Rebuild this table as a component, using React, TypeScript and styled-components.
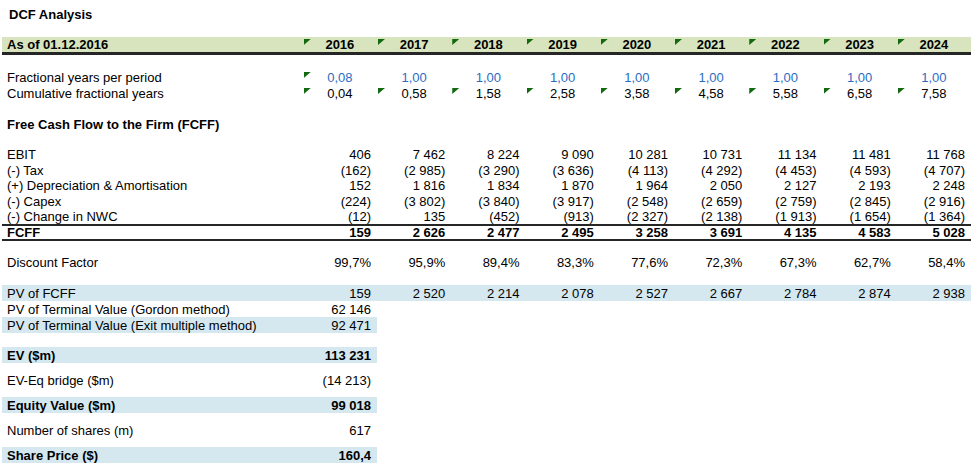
import React from "react";
import styled, { createGlobalStyle, css } from "styled-components";

const Global = createGlobalStyle`
  html, body { margin: 0; padding: 0; background: #ffffff; }
  body {
    font-family: "Liberation Sans", Arial, Helvetica, sans-serif;
    font-size: 13px;
    color: #000000;
  }
`;

const Sheet = styled.div`
  margin-left: 2px;
  width: 969px;
  display: flex;
  flex-direction: column;
`;

type RowProps = {
  $h: number;
  $mt?: number;
  $bg?: string;
  $short?: boolean;
  $bold?: boolean;
  $top?: number;
  $bottom?: number;
};

const Row = styled.div<RowProps>`
  display: grid;
  grid-template-columns: 300.75px repeat(9, 74.25px);
  align-items: center;
  height: ${(p) => p.$h}px;
  margin-top: ${(p) => p.$mt ?? 0}px;
  background: ${(p) => p.$bg ?? "transparent"};
  width: ${(p) => (p.$short ? "375px" : "969px")};
  font-weight: ${(p) => (p.$bold ? 700 : 400)};
  line-height: 1;
  ${(p) =>
    p.$top
      ? css`
          border-top: ${p.$top}px solid #262626;
        `
      : ""}
  ${(p) =>
    p.$bottom
      ? css`
          border-bottom: ${p.$bottom}px solid #262626;
        `
      : ""}
`;

const Title = styled.div`
  height: 28px;
  display: flex;
  align-items: center;
  padding-left: 7px;
  font-weight: 700;
`;

const Label = styled.div`
  padding-left: 5px;
  white-space: nowrap;
`;

const Cell = styled.div<{ $align?: "right" | "center"; $blue?: boolean }>`
  position: relative;
  height: 100%;
  display: flex;
  align-items: center;
  justify-content: ${(p) => (p.$align === "center" ? "center" : "flex-end")};
  padding-right: ${(p) => (p.$align === "center" ? "0" : "6px")};
  color: ${(p) => (p.$blue ? "#2a6cc4" : "inherit")};
  white-space: nowrap;
`;

const Flag = styled.span<{ $top?: number }>`
  position: absolute;
  left: 1px;
  top: ${(p) => p.$top ?? 2}px;
  width: 7px;
  height: 6px;
  background: #13690f;
  clip-path: polygon(0 0, 100% 0, 0 100%);
`;

const years = ["2016", "2017", "2018", "2019", "2020", "2021", "2022", "2023", "2024"];
const frac = ["0,08", "1,00", "1,00", "1,00", "1,00", "1,00", "1,00", "1,00", "1,00"];
const cum = ["0,04", "0,58", "1,58", "2,58", "3,58", "4,58", "5,58", "6,58", "7,58"];

const fcffRows: { label: string; values: string[]; h: number }[] = [
  { label: "EBIT", h: 16, values: ["406", "7 462", "8 224", "9 090", "10 281", "10 731", "11 134", "11 481", "11 768"] },
  { label: "(-) Tax", h: 16, values: ["(162)", "(2 985)", "(3 290)", "(3 636)", "(4 113)", "(4 292)", "(4 453)", "(4 593)", "(4 707)"] },
  { label: "(+) Depreciation & Amortisation", h: 15, values: ["152", "1 816", "1 834", "1 870", "1 964", "2 050", "2 127", "2 193", "2 248"] },
  { label: "(-) Capex", h: 16, values: ["(224)", "(3 802)", "(3 840)", "(3 917)", "(2 548)", "(2 659)", "(2 759)", "(2 845)", "(2 916)"] },
  { label: "(-) Change in NWC", h: 15, values: ["(12)", "135", "(452)", "(913)", "(2 327)", "(2 138)", "(1 913)", "(1 654)", "(1 364)"] },
];

const fcff = ["159", "2 626", "2 477", "2 495", "3 258", "3 691", "4 135", "4 583", "5 028"];
const discount = ["99,7%", "95,9%", "89,4%", "83,3%", "77,6%", "72,3%", "67,3%", "62,7%", "58,4%"];
const pv = ["159", "2 520", "2 214", "2 078", "2 527", "2 667", "2 784", "2 874", "2 938"];

const GREEN = "#d7e4bd";
const BLUE = "#d5e8f0";

export default function App() {
  return (
    <>
      <Global />
      <Sheet>
        <Title>DCF Analysis</Title>

        <Row $h={15} $mt={9} $bg={GREEN} $bold $bottom={3}>
          <Label>As of 01.12.2016</Label>
          {years.map((y) => (
            <Cell key={y} $align="center">
              <Flag />
              {y}
            </Cell>
          ))}
        </Row>

        <Row $h={16} $mt={14}>
          <Label>Fractional years per period</Label>
          {frac.map((v, i) => (
            <Cell key={i} $align="center" $blue>
              {i === 0 && <Flag $top={3} />}
              {v}
            </Cell>
          ))}
        </Row>
        <Row $h={16}>
          <Label>Cumulative fractional years</Label>
          {cum.map((v, i) => (
            <Cell key={i} $align="center">
              <Flag $top={3} />
              {v}
            </Cell>
          ))}
        </Row>

        <Row $h={16} $mt={15} $bold>
          <Label>Free Cash Flow to the Firm (FCFF)</Label>
        </Row>

        {fcffRows.map((r, idx) => (
          <Row key={r.label} $h={r.h} $mt={idx === 0 ? 14 : 0}>
            <Label>{r.label}</Label>
            {r.values.map((v, i) => (
              <Cell key={i}>{v}</Cell>
            ))}
          </Row>
        ))}

        <Row $h={13} $bold $top={2} $bottom={2}>
          <Label>FCFF</Label>
          {fcff.map((v, i) => (
            <Cell key={i}>{v}</Cell>
          ))}
        </Row>

        <Row $h={16} $mt={13}>
          <Label>Discount Factor</Label>
          {discount.map((v, i) => (
            <Cell key={i}>{v}</Cell>
          ))}
        </Row>

        <Row $h={16} $mt={15} $bg={BLUE}>
          <Label>PV of FCFF</Label>
          {pv.map((v, i) => (
            <Cell key={i}>{v}</Cell>
          ))}
        </Row>
        <Row $h={16} $short>
          <Label>PV of Terminal Value (Gordon method)</Label>
          <Cell>62 146</Cell>
        </Row>
        <Row $h={16} $short $bg={BLUE}>
          <Label>PV of Terminal Value (Exit multiple method)</Label>
          <Cell>92 471</Cell>
        </Row>

        <Row $h={16} $mt={14} $short $bg={BLUE} $bold>
          <Label>EV ($m)</Label>
          <Cell>113 231</Cell>
        </Row>
        <Row $h={34} $short>
          <Label>EV-Eq bridge ($m)</Label>
          <Cell>(14 213)</Cell>
        </Row>
        <Row $h={16} $short $bg={BLUE} $bold>
          <Label>Equity Value ($m)</Label>
          <Cell>99 018</Cell>
        </Row>
        <Row $h={34} $short>
          <Label>Number of shares (m)</Label>
          <Cell>617</Cell>
        </Row>
        <Row $h={16} $short $bg={BLUE} $bold>
          <Label>Share Price ($)</Label>
          <Cell>160,4</Cell>
        </Row>
      </Sheet>
    </>
  );
}
